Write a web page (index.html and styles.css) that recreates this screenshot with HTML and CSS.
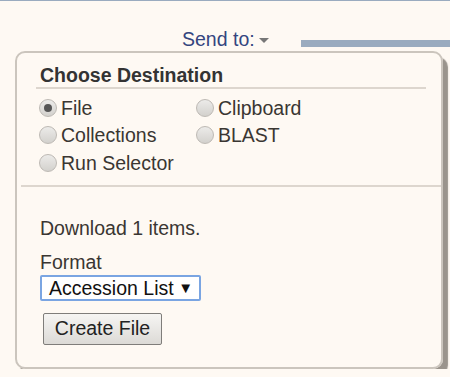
FILE: index.html
```html
<!DOCTYPE html>
<html lang="en">
<head>
    <meta charset="UTF-8">
    <meta name="viewport" content="width=device-width, initial-scale=1.0">
    <title>Send to</title>
    <link rel="stylesheet" href="styles.css">
</head>
<body>
    <div id="toolbar">
        <span class="send_to">Send to:<span class="send_arrow"></span></span>
        <div class="toolbar_bar"></div>
    </div>

    <div id="send_panel">
        <h3 class="panel_title">Choose Destination</h3>
        <ul class="dest_list">
            <li class="dest_item"><span class="radio checked"></span>File</li>
            <li class="dest_item"><span class="radio"></span>Clipboard</li>
            <li class="dest_item"><span class="radio"></span>Collections</li>
            <li class="dest_item"><span class="radio"></span>BLAST</li>
            <li class="dest_item"><span class="radio"></span>Run Selector</li>
        </ul>
        <div class="panel_body">
            <p class="download_text">Download 1 items.</p>
            <p class="format_label">Format</p>
            <div class="format_select">
                <span>Accession List</span>
                <span class="select_arrow">&#9660;</span>
            </div>
            <button class="create_btn">Create File</button>
        </div>
    </div>
</body>
</html>
```

FILE: styles.css
```css
body {
    margin: 0;
    padding: 0;
    font-family: "Liberation Sans", Arial, Helvetica, sans-serif;
    font-size: 19.5px;
    line-height: 22px;
    color: #3a3632;
    background-color: #fef9f3;
    border-top: 1px solid #9aabbf;
}

#toolbar {
    display: flex;
    align-items: flex-end;
    height: 49px;
    padding-left: 182px;
}

.send_to {
    color: #34457f;
}

.send_arrow {
    display: inline-block;
    margin-left: 4px;
    margin-bottom: 3px;
    border-left: 5.5px solid transparent;
    border-right: 5.5px solid transparent;
    border-top: 5px solid #777;
}

.toolbar_bar {
    flex: 1;
    height: 7px;
    margin-left: 32px;
    margin-bottom: 3px;
    background-color: #9aabbf;
}

#send_panel {
    box-sizing: border-box;
    width: 428px;
    height: 318px;
    margin: 1px 0 0 15px;
    border: 2px solid #cbc5bd;
    border-radius: 10px;
    box-shadow: 5px 6px 1px #9a948c;
}

.panel_title {
    margin: 11px 15px 0 19px;
    padding: 0 0 1px 4px;
    font-size: 19.5px;
    line-height: 22px;
    color: #333;
    border-bottom: 2px solid #ddd6ce;
}

/* the line under the radios starts close to the left border */
.dest_list {
    list-style-type: none;
    display: grid;
    grid-template-columns: 157px auto;
    grid-auto-rows: 27.5px;
    margin: 5px 0 0 4px;
    padding: 0 0 8px 18px;
    border-bottom: 2px solid #ddd6ce;
}

.dest_item {
    display: flex;
    align-items: center;
}

.radio {
    box-sizing: border-box;
    width: 18px;
    height: 18px;
    margin-right: 4px;
    border: 1px solid #bdb9b4;
    border-radius: 50%;
    background: linear-gradient(#ecebe9, #d3d1cd);
    display: flex;
    align-items: center;
    justify-content: center;
}

.radio.checked::after {
    content: "";
    width: 8px;
    height: 8px;
    border-radius: 50%;
    background-color: #555;
}

.panel_body {
    padding: 30px 0 0 23px;
}

.download_text {
    margin: 0 0 12px 0;
}

.format_label {
    margin: 0 0 2px 0;
}

.format_select {
    box-sizing: border-box;
    display: flex;
    align-items: center;
    justify-content: space-between;
    width: 161px;
    height: 26px;
    padding: 0 6px 0 7px;
    border: 2px solid #7aa5e2;
    border-radius: 2px;
    background-color: #fff;
    color: #111;
}

.select_arrow {
    font-size: 15px;
}

.create_btn {
    display: block;
    box-sizing: border-box;
    width: 119px;
    height: 32px;
    margin: 12px 0 0 3px;
    padding: 0;
    font-family: "Liberation Sans", Arial, Helvetica, sans-serif;
    font-size: 19.5px;
    color: #222;
    border: 1px solid #7f7d7a;
    border-radius: 2px;
    background: linear-gradient(#f6f5f3, #dcdad6);
}
```
